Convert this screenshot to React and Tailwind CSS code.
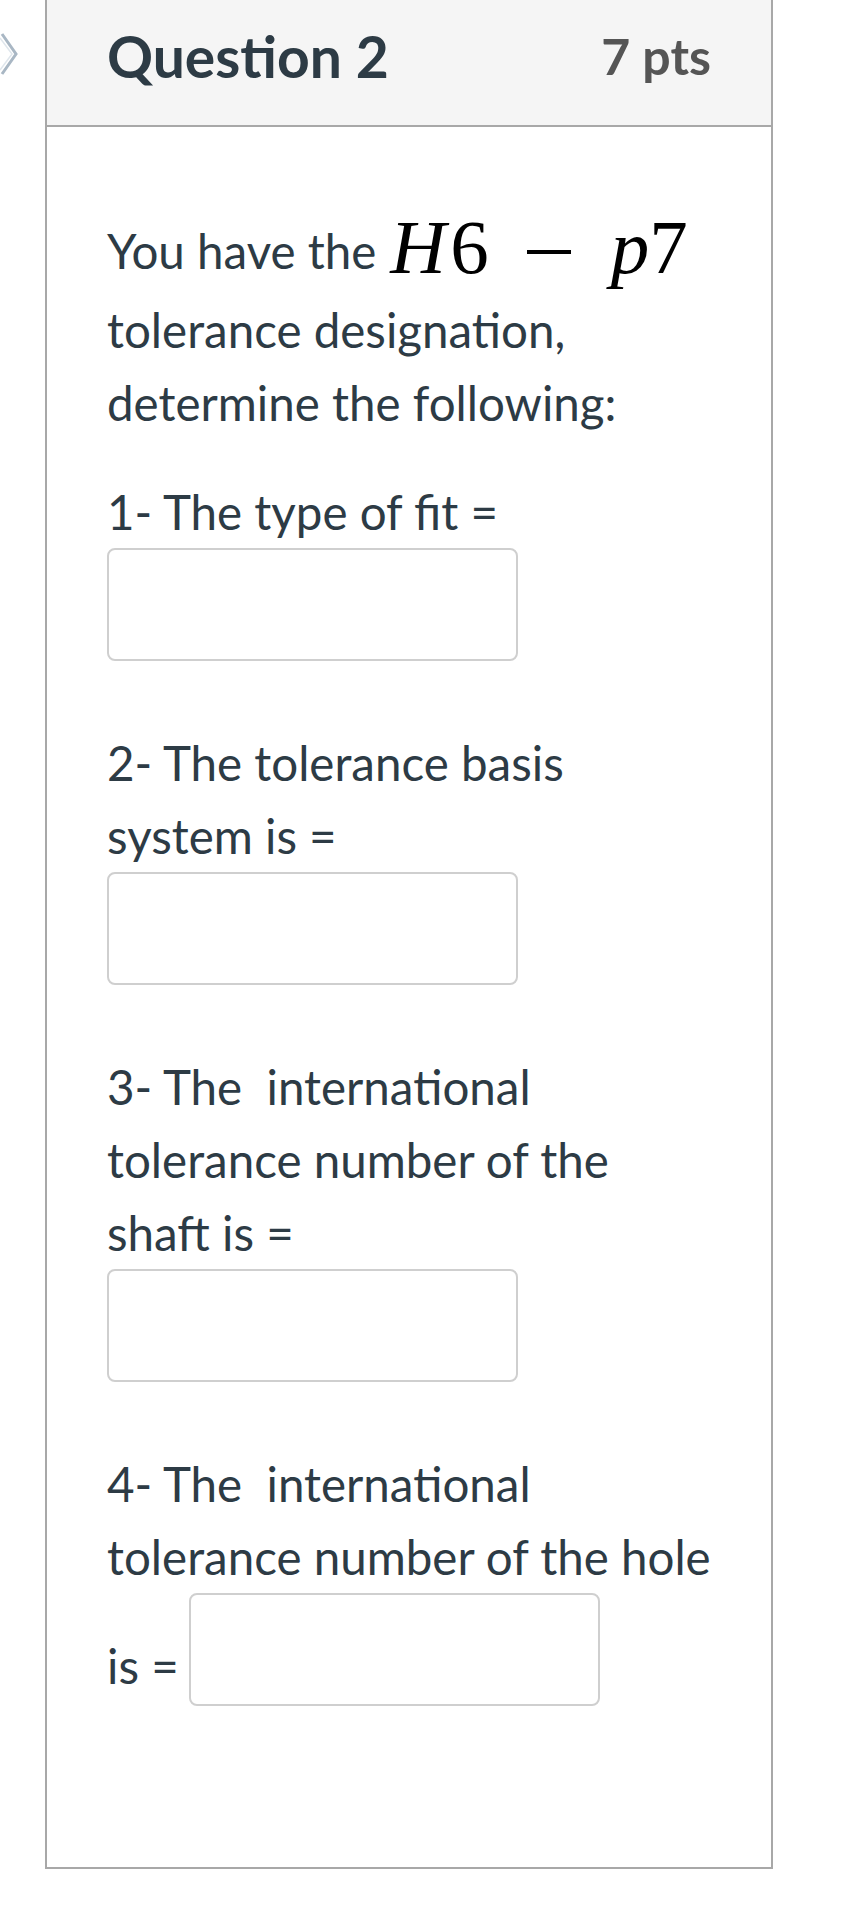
export default function App() {
  const box = "block w-[411px] h-[113px] border-2 border-[#cfcfcf] rounded-[8px] bg-white";
  return (
    <div className="relative w-[848px] h-[1920px] bg-white" style={{ fontFamily: "Lato, 'Open Sans', sans-serif" }}>
      <svg className="absolute left-0 top-[30px]" width="20" height="48" viewBox="0 0 20 48">
        <polyline points="2,4 16,24 2,44" fill="none" stroke="#a9b7c4" strokeWidth="3" />
        <polyline points="0,8 12,24 0,40" fill="none" stroke="#dfe6ec" strokeWidth="1.5" />
      </svg>
      <div className="ml-[45px] w-[728px] h-[1869px] border-x-2 border-b-2 border-[#a8a8a8] flex flex-col">
        <div className="h-[127px] bg-[#f5f5f5] border-b-2 border-[#a8a8a8] flex items-center justify-between pl-[60px] pr-[60px] pb-[12px]">
          <span className="text-[57px] font-bold text-[#2d3b45]">Question 2</span>
          <span className="text-[50px] font-bold text-[#555555]">7 pts</span>
        </div>
        <div className="pl-[60px] pt-[82px] text-[47.5px] leading-[73px] text-[#2d3b45]">
          <p className="h-[84px] leading-[84px] whitespace-nowrap">
            <span>You have the</span>
            <span className="ml-[14px] text-[77px] leading-[0px] text-black align-[-4px]" style={{ fontFamily: "'Liberation Serif', 'Times New Roman', serif" }}>
              <i className="inline-block w-[60px]">H</i>
              <span className="inline-block">6</span>
              <span aria-label="−" className="inline-block ml-[38px] w-[44px] h-[4px] bg-black align-[19px]"></span>
              <i className="inline-block ml-[40px]">p</i>
              <span className="inline-block">7</span>
            </span>
          </p>
          <p>tolerance designation,</p>
          <p>determine the following:</p>

          <p className="mt-[36px]">1- The type of fit =</p>
          <div className={box}></div>

          <p className="mt-[65px]">2- The tolerance basis</p>
          <p>system is =</p>
          <div className={box}></div>

          <p className="mt-[65px]">3- The&nbsp; international</p>
          <p>tolerance number of the</p>
          <p>shaft is =</p>
          <div className={box}></div>

          <p className="mt-[65px]">4- The&nbsp; international</p>
          <p>tolerance number of the hole</p>
          <div className="flex items-end">
            <span className="leading-[73px] mb-[4px]">is =</span>
            <div className="ml-[10px] w-[411px] h-[113px] border-2 border-[#cfcfcf] rounded-[8px] bg-white"></div>
          </div>
        </div>
      </div>
    </div>
  );
}
